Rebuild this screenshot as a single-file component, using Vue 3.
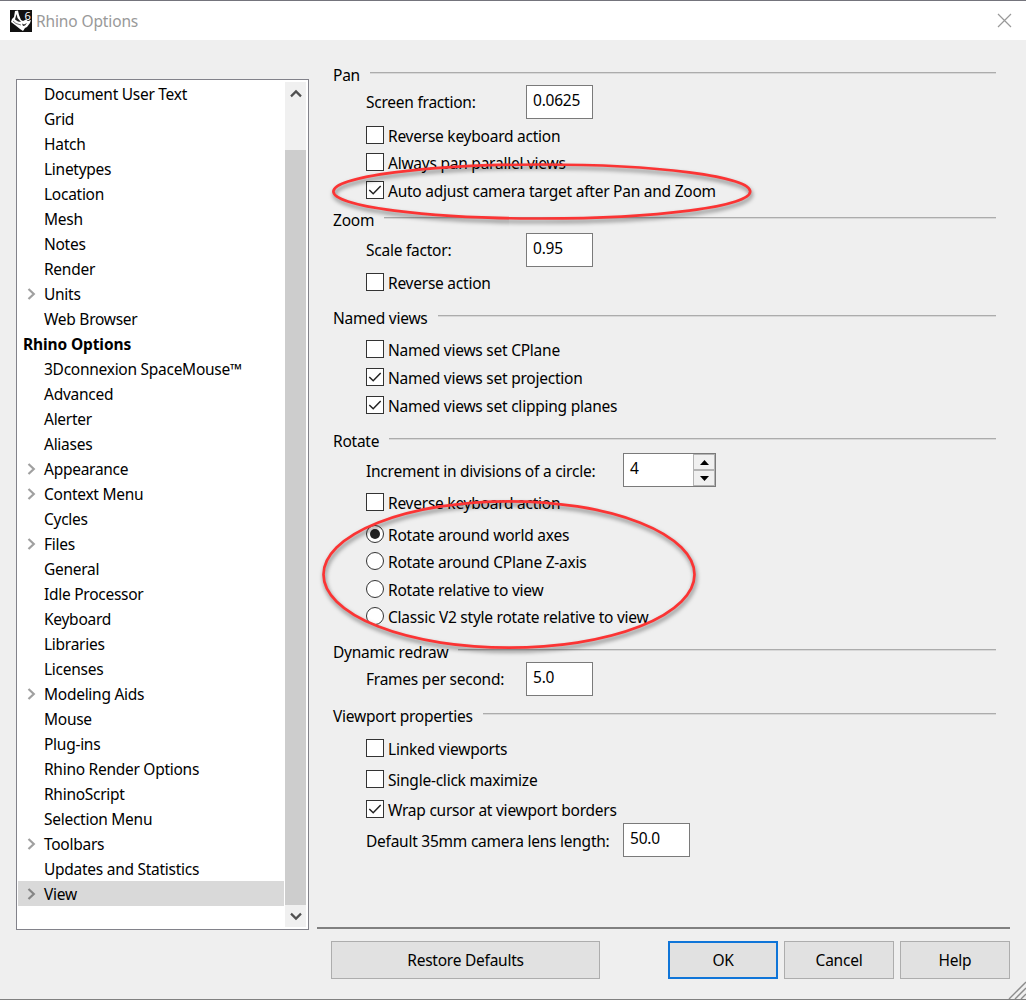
<script setup>
import { ref } from 'vue';

const treeItems = [
  { name: 'Document User Text' },
  { name: 'Grid' },
  { name: 'Hatch' },
  { name: 'Linetypes' },
  { name: 'Location' },
  { name: 'Mesh' },
  { name: 'Notes' },
  { name: 'Render' },
  { name: 'Units', expandable: true },
  { name: 'Web Browser' },
  { name: 'Rhino Options', root: true },
  { name: '3Dconnexion SpaceMouse™' },
  { name: 'Advanced' },
  { name: 'Alerter' },
  { name: 'Aliases' },
  { name: 'Appearance', expandable: true },
  { name: 'Context Menu', expandable: true },
  { name: 'Cycles' },
  { name: 'Files', expandable: true },
  { name: 'General' },
  { name: 'Idle Processor' },
  { name: 'Keyboard' },
  { name: 'Libraries' },
  { name: 'Licenses' },
  { name: 'Modeling Aids', expandable: true },
  { name: 'Mouse' },
  { name: 'Plug-ins' },
  { name: 'Rhino Render Options' },
  { name: 'RhinoScript' },
  { name: 'Selection Menu' },
  { name: 'Toolbars', expandable: true },
  { name: 'Updates and Statistics' },
  { name: 'View', expandable: true }
];

const selected = ref('View');

const sections = ref([
  {
    id: 'pan',
    title: 'Pan',
    rows: [
      { type: 'text', label: 'Screen fraction:', value: '0.0625' },
      { type: 'check', label: 'Reverse keyboard action', checked: false },
      { type: 'check', label: 'Always pan parallel views', checked: false },
      { type: 'check', label: 'Auto adjust camera target after Pan and Zoom', checked: true }
    ]
  },
  {
    id: 'zoom',
    title: 'Zoom',
    rows: [
      { type: 'text', label: 'Scale factor:', value: '0.95' },
      { type: 'check', label: 'Reverse action', checked: false }
    ]
  },
  {
    id: 'named',
    title: 'Named views',
    rows: [
      { type: 'check', label: 'Named views set CPlane', checked: false },
      { type: 'check', label: 'Named views set projection', checked: true },
      { type: 'check', label: 'Named views set clipping planes', checked: true }
    ]
  },
  {
    id: 'rotate',
    title: 'Rotate',
    rows: [
      { type: 'spin', label: 'Increment in divisions of a circle:', value: '4', wide: true },
      { type: 'check', label: 'Reverse keyboard action', checked: false },
      { type: 'radio', label: 'Rotate around world axes', checked: true },
      { type: 'radio', label: 'Rotate around CPlane Z-axis', checked: false },
      { type: 'radio', label: 'Rotate relative to view', checked: false },
      { type: 'radio', label: 'Classic V2 style rotate relative to view', checked: false }
    ]
  },
  {
    id: 'redraw',
    title: 'Dynamic redraw',
    rows: [{ type: 'text', label: 'Frames per second:', value: '5.0' }]
  },
  {
    id: 'viewport',
    title: 'Viewport properties',
    rows: [
      { type: 'check', label: 'Linked viewports', checked: false },
      { type: 'check', label: 'Single-click maximize', checked: false },
      { type: 'check', label: 'Wrap cursor at viewport borders', checked: true },
      { type: 'text', label: 'Default 35mm camera lens length:', value: '50.0', wide: true }
    ]
  }
]);

const toggle = (section, row) => {
  if (row.type === 'check') {
    row.checked = !row.checked;
  } else if (row.type === 'radio') {
    section.rows.forEach(r => {
      if (r.type === 'radio') r.checked = r === row;
    });
  }
};
</script>

<template>
  <div class="window">
    <header class="titlebar">
      <svg class="logo" width="22" height="22" viewBox="0 0 22 22">
        <rect width="22" height="22" fill="#111" />
        <path d="M5 1 L8 0.5 L9 5 L11 10 L13 11 L16 9.5 L18 11 L21 10 L20 13 L17 17 L15 18 L13 21 L10 19 L5 15 L1 12 L2 9 L4 7 Z" fill="#fff" />
        <path d="M6.5 4 L7.5 8 L11 12 L8 11.5 L5 9.5 Z M12 13.5 L14 14.5 L17 13 L15 15.5 L13 16 Z" fill="#222" />
        <path d="M3 11 L6 13.5 L11 15" fill="none" stroke="#777" stroke-width="1" />
        <text x="14.5" y="9.5" font-size="11" fill="#fff">6</text>
      </svg>
      <h1>Rhino Options</h1>
      <svg class="close" width="15" height="15" viewBox="0 0 15 15">
        <path d="M1 1 L14 14 M14 1 L1 14" fill="none" stroke="#999" stroke-width="1.2" />
      </svg>
    </header>

    <main class="body">
      <aside class="tree">
        <ul>
          <li
            v-for="item in treeItems"
            :key="item.name"
            :class="{ root: item.root, selected: item.name === selected }"
            @click="selected = item.name"
          >
            <span class="arrow">
              <svg v-if="item.expandable" width="9" height="12" viewBox="0 0 9 12">
                <path d="M1.5 1 L6.8 6 L1.5 11" fill="none" stroke="currentColor" stroke-width="2.2" />
              </svg>
            </span>
            <span class="name">{{ item.name }}</span>
          </li>
        </ul>
        <div class="scrollbar">
          <svg width="12" height="9" viewBox="0 0 12 9">
            <path d="M1 7.4 L6 2.4 L11 7.4" fill="none" stroke="#505050" stroke-width="2.2" />
          </svg>
          <div class="thumb"></div>
          <svg width="12" height="9" viewBox="0 0 12 9">
            <path d="M1 1.6 L6 6.6 L11 1.6" fill="none" stroke="#505050" stroke-width="2.2" />
          </svg>
        </div>
      </aside>

      <div class="page">
        <div class="settings">
          <section v-for="section in sections" :key="section.id" :class="section.id">
            <div class="section-head">
              <h2>{{ section.title }}</h2>
              <span class="rule"></span>
            </div>
            <div
              v-for="row in section.rows"
              :key="row.label"
              class="row"
              :class="[row.type, { wide: row.wide }]"
              @click="toggle(section, row)"
            >
              <template v-if="row.type === 'check' || row.type === 'radio'">
                <span class="box">
                  <svg v-if="row.type === 'check' && row.checked" width="16" height="16" viewBox="0 0 16 16">
                    <path d="M2.3 8 L6.2 11.8 L13.7 4" fill="none" stroke="#222" stroke-width="1.5" />
                  </svg>
                  <span v-if="row.type === 'radio' && row.checked" class="dot"></span>
                </span>
                <span class="caption">{{ row.label }}</span>
              </template>
              <template v-else>
                <span class="label">{{ row.label }}</span>
                <div class="field">
                  <span class="value">{{ row.value }}</span>
                  <div v-if="row.type === 'spin'" class="spinner">
                    <span><svg width="9" height="5" viewBox="0 0 9 5"><path d="M0 5 L4.5 0 L9 5 Z" /></svg></span>
                    <span><svg width="9" height="5" viewBox="0 0 9 5"><path d="M0 0 L4.5 5 L9 0 Z" /></svg></span>
                  </div>
                </div>
              </template>
            </div>
          </section>
        </div>

        <footer class="buttons">
          <button class="restore">Restore Defaults</button>
          <button class="primary">OK</button>
          <button>Cancel</button>
          <button>Help</button>
        </footer>
      </div>
    </main>

    <svg class="marks" width="1026" height="1000" viewBox="0 0 1026 1000">
      <ellipse cx="541.8" cy="191.5" rx="208.4" ry="27" />
      <ellipse cx="509" cy="574.5" rx="185.5" ry="73.2" />
    </svg>
    <svg class="grip" width="18" height="18" viewBox="0 0 18 18">
      <path d="M1 18 L18 1 M7 18 L18 7 M13 18 L18 13" fill="none" stroke="#8c8c8c" stroke-width="1.4" />
    </svg>
  </div>
</template>

<style>
body {
  margin: 0;
}
</style>

<style scoped>
.window {
  position: relative;
  box-sizing: border-box;
  width: 1026px;
  height: 1000px;
  overflow: hidden;
  display: flex;
  flex-direction: column;
  background: #efefef;
  border-top: 1px solid #74747c;
  border-bottom: 1px solid #808080;
  font-family: "Noto Sans", "Open Sans", sans-serif;
  font-size: 15.5px;
  letter-spacing: -0.24px;
  color: #000;
}

.titlebar {
  display: flex;
  align-items: center;
  flex: none;
  height: 39px;
  padding: 0 14px 0 10px;
  background: #fff;
}

.logo {
  margin-right: 4px;
  overflow: visible;
}

.titlebar h1 {
  flex: 1;
  margin: 0;
  font-size: 15.5px;
  font-weight: 400;
  letter-spacing: -0.13px;
  color: #999;
}

.body {
  flex: 1;
  display: flex;
  min-height: 0;
}

.tree {
  box-sizing: border-box;
  display: flex;
  width: 293px;
  height: 851px;
  margin: 39px 8px 0 16px;
  padding: 1px;
  border: 1px solid #82828a;
  background: #fff;
}

.tree ul {
  width: 266px;
  margin: 0 1px 0 0;
  padding: 0;
  list-style: none;
}

.tree li {
  display: flex;
  align-items: center;
  height: 25px;
  line-height: 25px;
  letter-spacing: -0.27px;
  white-space: nowrap;
}

.tree li.selected {
  background: #d9d9d9;
}

.name {
  padding-top: 2px;
  line-height: 23px;
}

.arrow {
  display: flex;
  width: 17px;
  padding-left: 9px;
  color: #a0a0a0;
}

.selected .arrow {
  color: #858585;
}

.root .arrow {
  width: 5px;
  padding-left: 0;
}

.tree li.root {
  font-weight: 700;
  letter-spacing: -0.12px;
}

.scrollbar {
  box-sizing: border-box;
  display: flex;
  flex-direction: column;
  align-items: center;
  width: 21px;
  margin: 1px 0;
  padding: 7px 0 6px;
  background: #f0f0f0;
}

.thumb {
  flex: 1;
  width: 21px;
  margin: 52px 0 7px;
  background: #cdcdcd;
}

.page {
  flex: 1;
  display: flex;
  flex-direction: column;
  margin-right: 16px;
}

.settings {
  box-sizing: border-box;
  height: 889px;
  padding: 22px 14px 0 16px;
  border-bottom: 2px solid #808080;
}

section {
  display: grid;
}

.pan {
  grid-template-rows: 23px 41px 27px 28px 26px;
}

.zoom {
  grid-template-rows: 26px 40px 32px;
}

.named {
  grid-template-rows: 35px 28px 28px 32px;
}

.rotate {
  grid-template-rows: 25px 40px 32px 27px 28px 27px 32px;
}

.redraw {
  grid-template-rows: 23px 41px;
}

.viewport {
  grid-template-rows: 36px 31px 30px 23px 35px;
}

.section-head {
  display: flex;
  align-items: center;
  height: 21px;
}

.section-head h2 {
  margin: 0 10px 0 0;
  padding-top: 4px;
  font-size: 15.5px;
  font-weight: 400;
  line-height: 20px;
}

.rule {
  flex: 1;
  height: 1px;
  background: #acacac;
  border-bottom: 1px solid #d8d8d8;
}

.row {
  display: flex;
  align-items: flex-start;
  padding-left: 33px;
  white-space: nowrap;
}

.box {
  box-sizing: border-box;
  display: flex;
  align-items: center;
  justify-content: center;
  width: 18px;
  height: 18px;
  margin-right: 4px;
  border: 1px solid #333;
  background: #fff;
}

.radio .box {
  border-radius: 50%;
}

.dot {
  width: 10px;
  height: 10px;
  border-radius: 50%;
  background: #222;
}

.caption {
  padding-top: 1px;
  line-height: 18px;
}

.label {
  width: 160px;
  line-height: 34px;
}

.wide .label {
  width: 257px;
  padding-top: 1px;
}

.field {
  box-sizing: border-box;
  display: flex;
  justify-content: space-between;
  width: 67px;
  height: 34px;
  border: 1px solid #7a7a7a;
  background: #fff;
}

.spin .field {
  width: 93px;
}

.value {
  padding-left: 6px;
  line-height: 28px;
}

.spinner {
  display: flex;
  flex-direction: column;
  width: 22px;
  background: #f0f0f0;
}

.spinner span {
  flex: 1;
  display: flex;
  align-items: center;
  justify-content: center;
  border: 1px solid #b4b4b4;
}

.buttons {
  display: flex;
  gap: 6px;
  padding: 12px 0 0 14px;
}

.buttons button {
  box-sizing: border-box;
  width: 110px;
  height: 38px;
  padding: 0;
  border: 1px solid #adadad;
  background: #e1e1e1;
  font-family: inherit;
  font-size: 15.5px;
  letter-spacing: inherit;
  color: #000;
}

.buttons .restore {
  width: 269px;
  margin-right: 62px;
}

.buttons .primary {
  border: 2px solid #0f75d8;
}

.marks {
  position: absolute;
  top: -1px;
  left: 0;
  pointer-events: none;
}

.marks ellipse {
  fill: none;
  stroke: #fb3434;
  stroke-width: 2.7;
  filter: drop-shadow(1px 3px 2px rgba(0, 0, 0, 0.5));
}

.grip {
  position: absolute;
  right: 0;
  bottom: 0;
}
</style>
